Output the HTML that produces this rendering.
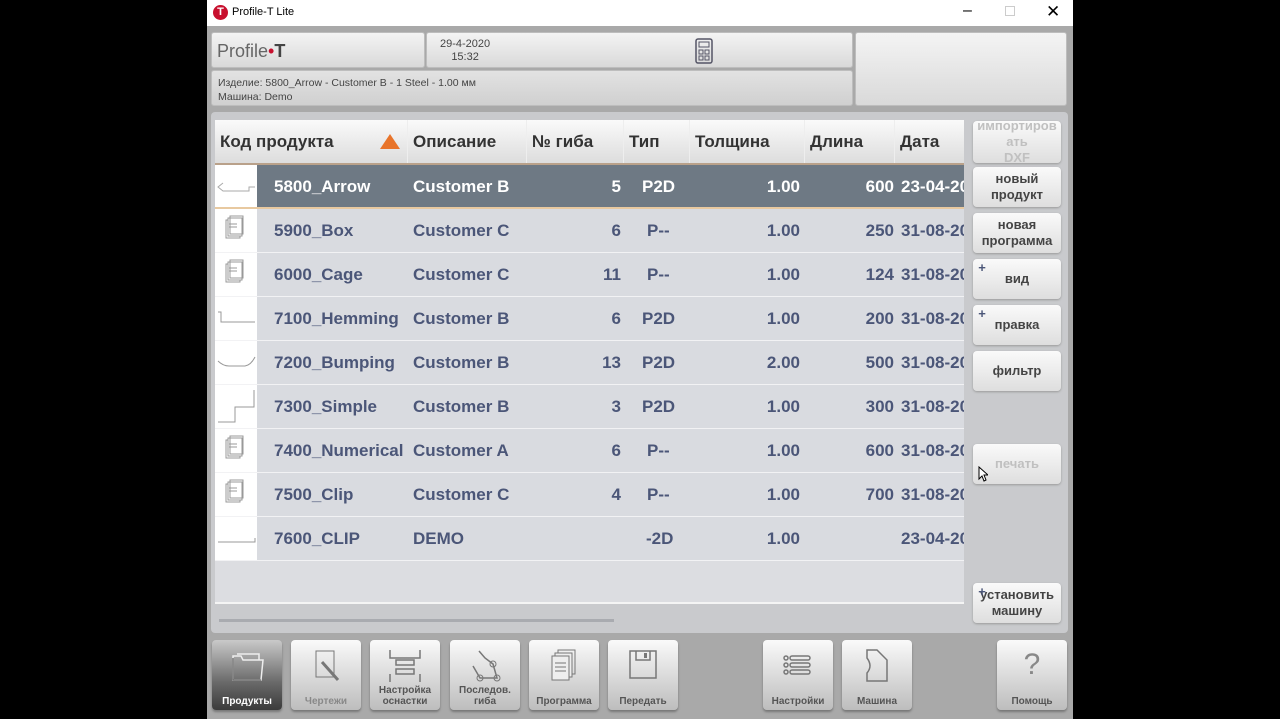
<!DOCTYPE html>
<html><head><meta charset="utf-8"><style>
*{box-sizing:border-box;margin:0;padding:0}
body{width:1280px;height:719px;background:#000;font-family:"Liberation Sans",sans-serif;position:relative;overflow:hidden}
.win{position:absolute;left:207px;top:0;width:866px;height:719px;background:#a9a9a9}
.title{position:absolute;left:0;top:0;width:866px;height:26px;background:#fff;font-size:11px;color:#000}
.abs{position:absolute}
.box{position:absolute;background:linear-gradient(#f4f4f4,#d9d9d9);border-radius:3px;border:1px solid #bdbdbd}
.panel{position:absolute;left:4px;top:112px;width:857px;height:521px;background:#c9cacd;border-radius:4px}
.hdr{position:absolute;top:120px;height:44px;background:linear-gradient(#fafafa,#dcdcdc);font-weight:bold;font-size:17px;color:#333;line-height:44px;padding-left:5px;border-right:1px solid #eee}
.row{position:absolute;left:8px;width:749px;height:44px;background:#d9dbe0;overflow:hidden;border-bottom:1px solid #f2f2f4}
.row .ic{position:absolute;left:0;top:0;width:42px;height:43px;background:#fff}
.row span{position:absolute;top:0;line-height:43px;font-size:17px;font-weight:bold;color:#4b5678;white-space:nowrap}
.row.sel{background:#6e7984;border-bottom:2px solid #e8c9a0}
.row.sel span{color:#fff}
.rb{position:absolute;left:766px;width:88px;height:40px;background:linear-gradient(#fafafa,#dedede);border-radius:4px;box-shadow:0 1px 2px #999;font-size:13px;font-weight:bold;color:#444;text-align:center;display:flex;align-items:center;justify-content:center;line-height:16px}
.rb.dis{color:#c0c0c0}
.rb .pl{position:absolute;left:5px;top:1px;font-size:13px;color:#4b5678}
.tb{position:absolute;top:640px;width:70px;height:70px;background:linear-gradient(#fafafa,#bdbdbd);border-radius:4px;box-shadow:0 2px 2px #777;font-size:10px;font-weight:bold;color:#555;text-align:center}
.tb .lb{position:absolute;left:0;right:0;bottom:3px;line-height:11px}
.tb svg{position:absolute;left:17px;top:8px}
</style></head><body>
<div class="win">
 <div class="title">
  <div class="abs" style="left:6px;top:5px;width:15px;height:15px;border-radius:50%;background:#c8102e;color:#fff;font-size:11px;font-weight:bold;text-align:center;line-height:15px">T</div>
  <div class="abs" style="left:25px;top:6px">Profile-T Lite</div>
  <div class="abs" style="left:756px;top:2px;font-size:16px">&#8211;</div>
  <div class="abs" style="left:798px;top:6px;width:10px;height:10px;border:1px solid #ccc"></div>
  <div class="abs" style="left:839px;top:2px;font-size:17px">&#10005;</div>
 </div>
 <div class="box" style="left:4px;top:32px;width:214px;height:36px"><div class="abs" style="left:5px;top:8px;font-size:18px;color:#666">Profile<span style="color:#c8102e">&#8226;</span><b style="color:#444">T</b></div></div>
 <div class="box" style="left:219px;top:32px;width:427px;height:36px"><div class="abs" style="left:13px;top:5px;font-size:11px;color:#444;text-align:center;line-height:13px">29-4-2020<br>15:32</div>
  <svg class="abs" style="left:268px;top:5px" width="18" height="26"><rect x="1" y="1" width="16" height="24" rx="2" fill="none" stroke="#556" stroke-width="1.5"/><rect x="4" y="4" width="10" height="5" fill="none" stroke="#556"/><rect x="4" y="12" width="4" height="4" fill="none" stroke="#556"/><rect x="10" y="12" width="4" height="4" fill="none" stroke="#556"/><rect x="4" y="18" width="4" height="4" fill="none" stroke="#556"/><rect x="10" y="18" width="4" height="4" fill="none" stroke="#556"/></svg></div>
 <div class="box" style="left:4px;top:70px;width:642px;height:36px;background:linear-gradient(#e2e2e2,#d0d0d0)"><div class="abs" style="left:6px;top:5px;font-size:10.5px;color:#444;line-height:14px">Изделие: 5800_Arrow - Customer B - 1 Steel - 1.00 мм<br>Машина: Demo</div></div>
 <div class="box" style="left:648px;top:32px;width:212px;height:74px"></div>
 <div class="panel"></div>
 <div class="abs" style="left:8px;top:120px;width:749px;height:482px;background:#dcdde1"></div>
 <div class="hdr" style="left:8px;width:193px">Код продукта<svg class="abs" style="left:165px;top:14px" width="20" height="16"><polygon points="10,0 20,15 0,15" fill="#e8742a"/></svg></div>
 <div class="hdr" style="left:201px;width:119px">Описание</div>
 <div class="hdr" style="left:320px;width:97px">№ гиба</div>
 <div class="hdr" style="left:417px;width:66px">Тип</div>
 <div class="hdr" style="left:483px;width:115px">Толщина</div>
 <div class="hdr" style="left:598px;width:90px">Длина</div>
 <div class="hdr" style="left:688px;width:69px;border:none">Дата</div>
 <div class="abs" style="left:8px;top:163px;width:749px;height:2px;background:#b9a18a"></div>

 <div class="row sel" style="top:165px"><div class="ic"><svg width="42" height="43"><path d="M8 18 L3 22 L8 26 L34 26 L34 22 L40 22" fill="none" stroke="#aaa"/></svg></div><span style="left:59px">5800_Arrow</span><span style="left:198px">Customer B</span><span style="right:343px">5</span><span style="left:427px">P2D</span><span style="right:164px">1.00</span><span style="right:70px">600</span><span style="left:686px">23-04-20</span></div>
 <div class="row" style="top:209px"><div class="ic"><svg width="42" height="43"><rect x="11" y="11" width="14" height="18" fill="#fff" stroke="#999"/><rect x="13" y="9" width="14" height="18" fill="#fff" stroke="#999"/><rect x="15" y="7" width="13" height="18" fill="none" stroke="#999"/><line x1="14" y1="15" x2="22" y2="15" stroke="#999"/><line x1="14" y1="18" x2="22" y2="18" stroke="#999"/></svg></div><span style="left:59px">5900_Box</span><span style="left:198px">Customer C</span><span style="right:343px">6</span><span style="left:432px">P--</span><span style="right:164px">1.00</span><span style="right:70px">250</span><span style="left:686px">31-08-20</span></div>
 <div class="row" style="top:253px"><div class="ic"><svg width="42" height="43"><rect x="11" y="11" width="14" height="18" fill="#fff" stroke="#999"/><rect x="13" y="9" width="14" height="18" fill="#fff" stroke="#999"/><rect x="15" y="7" width="13" height="18" fill="none" stroke="#999"/><line x1="14" y1="15" x2="22" y2="15" stroke="#999"/><line x1="14" y1="18" x2="22" y2="18" stroke="#999"/></svg></div><span style="left:59px">6000_Cage</span><span style="left:198px">Customer C</span><span style="right:343px">11</span><span style="left:432px">P--</span><span style="right:164px">1.00</span><span style="right:70px">124</span><span style="left:686px">31-08-20</span></div>
 <div class="row" style="top:297px"><div class="ic"><svg width="42" height="43"><path d="M3 15 L6 15 L6 25 L40 25" fill="none" stroke="#999"/></svg></div><span style="left:59px">7100_Hemming</span><span style="left:198px">Customer B</span><span style="right:343px">6</span><span style="left:427px">P2D</span><span style="right:164px">1.00</span><span style="right:70px">200</span><span style="left:686px">31-08-20</span></div>
 <div class="row" style="top:341px"><div class="ic"><svg width="42" height="43"><path d="M3 20 Q8 25 14 25 L30 25 Q36 24 40 16" fill="none" stroke="#999"/></svg></div><span style="left:59px">7200_Bumping</span><span style="left:198px">Customer B</span><span style="right:343px">13</span><span style="left:427px">P2D</span><span style="right:164px">2.00</span><span style="right:70px">500</span><span style="left:686px">31-08-20</span></div>
 <div class="row" style="top:385px"><div class="ic"><svg width="42" height="43"><path d="M3 37 L20 37 L20 22 L39 22 L39 5" fill="none" stroke="#999"/></svg></div><span style="left:59px">7300_Simple</span><span style="left:198px">Customer B</span><span style="right:343px">3</span><span style="left:427px">P2D</span><span style="right:164px">1.00</span><span style="right:70px">300</span><span style="left:686px">31-08-20</span></div>
 <div class="row" style="top:429px"><div class="ic"><svg width="42" height="43"><rect x="11" y="11" width="14" height="18" fill="#fff" stroke="#999"/><rect x="13" y="9" width="14" height="18" fill="#fff" stroke="#999"/><rect x="15" y="7" width="13" height="18" fill="none" stroke="#999"/><line x1="14" y1="15" x2="22" y2="15" stroke="#999"/><line x1="14" y1="18" x2="22" y2="18" stroke="#999"/></svg></div><span style="left:59px">7400_Numerical</span><span style="left:198px">Customer A</span><span style="right:343px">6</span><span style="left:432px">P--</span><span style="right:164px">1.00</span><span style="right:70px">600</span><span style="left:686px">31-08-20</span></div>
 <div class="row" style="top:473px"><div class="ic"><svg width="42" height="43"><rect x="11" y="11" width="14" height="18" fill="#fff" stroke="#999"/><rect x="13" y="9" width="14" height="18" fill="#fff" stroke="#999"/><rect x="15" y="7" width="13" height="18" fill="none" stroke="#999"/><line x1="14" y1="15" x2="22" y2="15" stroke="#999"/><line x1="14" y1="18" x2="22" y2="18" stroke="#999"/></svg></div><span style="left:59px">7500_Clip</span><span style="left:198px">Customer C</span><span style="right:343px">4</span><span style="left:432px">P--</span><span style="right:164px">1.00</span><span style="right:70px">700</span><span style="left:686px">31-08-20</span></div>
 <div class="row" style="top:517px"><div class="ic"><svg width="42" height="43"><path d="M3 25 L40 25 L40 21" fill="none" stroke="#999"/></svg></div><span style="left:59px">7600_CLIP</span><span style="left:198px">DEMO</span><span style="left:431px">-2D</span><span style="right:164px">1.00</span><span style="left:686px">23-04-20</span></div>
 <div class="abs" style="left:8px;top:602px;width:749px;height:2px;background:#f4f4f4"></div>
 <div class="abs" style="left:12px;top:619px;width:395px;height:3px;background:#a9abb0"></div>

 <div class="rb dis" style="top:121px;height:42px">импортиров<br>ать<br>DXF</div>
 <div class="rb" style="top:167px">новый<br>продукт</div>
 <div class="rb" style="top:213px">новая<br>программа</div>
 <div class="rb" style="top:259px"><i class="pl">+</i>вид</div>
 <div class="rb" style="top:305px"><i class="pl">+</i>правка</div>
 <div class="rb" style="top:351px">фильтр</div>
 <div class="rb dis" style="top:444px">печать</div>
 <div class="rb" style="top:583px"><i class="pl">+</i>установить<br>машину</div>

 <div class="tb" style="left:5px;background:linear-gradient(#c9c9c9,#6a6a6a 60%,#3b3b3b);color:#fff"><svg width="36" height="36"><path d="M4 10 L4 32 L32 32 L34 12 L14 12 L12 8 L4 8 Z M8 6 L30 6 L30 12" fill="none" stroke="#eee" stroke-width="1.5"/><path d="M4 10 L4 32 L32 32" fill="none" stroke="#555" stroke-width="1"/></svg><div class="lb">Продукты</div></div>
 <div class="tb" style="left:84px;color:#888"><svg width="36" height="36"><rect x="8" y="3" width="18" height="26" fill="none" stroke="#777"/><path d="M14 14 L30 32" stroke="#777" stroke-width="3"/></svg><div class="lb">Чертежи</div></div>
 <div class="tb" style="left:163px"><svg width="36" height="36"><path d="M3 2 L3 10 L33 10 L33 2 M9 12 L27 12 L27 17 L9 17Z M9 21 L27 21 L27 26 L9 26Z M3 34 L3 26 M33 34 L33 26" fill="none" stroke="#777" stroke-width="1.5"/></svg><div class="lb">Настройка<br>оснастки</div></div>
 <div class="tb" style="left:243px"><svg width="36" height="36"><path d="M12 3 L18 10 L26 16 L30 30 L13 30 L6 18" fill="none" stroke="#777" stroke-width="1.5"/><circle cx="13" cy="30" r="3" fill="none" stroke="#777"/><circle cx="30" cy="30" r="3" fill="none" stroke="#777"/><circle cx="26" cy="16" r="3" fill="none" stroke="#777"/></svg><div class="lb">Последов.<br>гиба</div></div>
 <div class="tb" style="left:322px"><svg width="36" height="36"><rect x="12" y="2" width="17" height="24" fill="none" stroke="#777"/><rect x="9" y="5" width="17" height="24" fill="#eee" stroke="#777"/><rect x="6" y="8" width="17" height="24" fill="#eee" stroke="#777"/><line x1="9" y1="15" x2="20" y2="15" stroke="#777"/><line x1="9" y1="19" x2="20" y2="19" stroke="#777"/><line x1="9" y1="23" x2="20" y2="23" stroke="#777"/></svg><div class="lb">Программа</div></div>
 <div class="tb" style="left:401px"><svg width="36" height="36"><path d="M5 3 L31 3 L31 30 L5 30 Z M11 3 L11 12 L25 12 L25 3" fill="none" stroke="#777" stroke-width="1.5"/><rect x="19" y="5" width="3" height="5" fill="#777"/></svg><div class="lb">Передать</div></div>
 <div class="tb" style="left:556px"><svg width="36" height="36"><g fill="none" stroke="#777" stroke-width="1.5"><circle cx="6" cy="10" r="2"/><circle cx="6" cy="17" r="2"/><circle cx="6" cy="24" r="2"/><rect x="10" y="8" width="20" height="4" rx="2"/><rect x="10" y="15" width="20" height="4" rx="2"/><rect x="10" y="22" width="20" height="4" rx="2"/></g></svg><div class="lb">Настройки</div></div>
 <div class="tb" style="left:635px"><svg width="36" height="36"><path d="M8 2 L18 2 L28 12 L28 33 L8 33 L8 25 Q14 18 8 10 Z" fill="none" stroke="#777" stroke-width="1.5"/></svg><div class="lb">Машина</div></div>
 <div class="tb" style="left:790px"><div class="abs" style="left:0;right:0;top:8px;font-size:30px;color:#888;font-weight:normal">?</div><div class="lb">Помощь</div></div>
</div>
<svg class="abs" style="left:978px;top:466px" width="10" height="16"><path d="M1 1 L1 13 L4 10 L6 15 L8 14 L6 9 L10 9 Z" fill="#fff" stroke="#000"/></svg>
</body></html>
